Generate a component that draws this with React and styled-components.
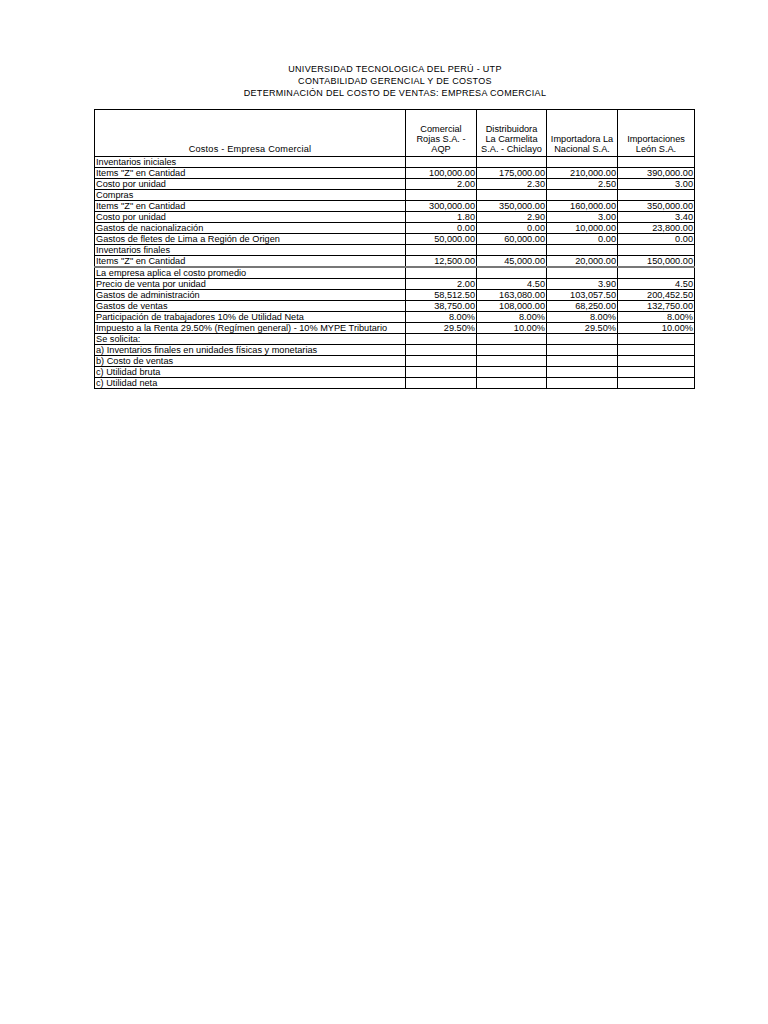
import React from 'react';
import styled, {createGlobalStyle} from 'styled-components';

const GlobalStyle = createGlobalStyle`
    html, body {
        margin: 0;
        padding: 0;
        background: #ffffff;
    }
    body {
        font-family: "Liberation Sans", Arial, sans-serif;
        color: #000;
    }
`;

const Page = styled.div`
    width: 768px;
    height: 1024px;
    padding-top: 63px;
    box-sizing: border-box;
    display: flex;
    flex-direction: column;
    align-items: center;
`;

const Titles = styled.div`
    display: flex;
    flex-direction: column;
    align-items: center;
    margin-left: 22px;
    margin-bottom: 10px;
`;

const TitleLine = styled.div`
    font-size: 9px;
    line-height: 12px;
    letter-spacing: 0.3px;
`;

const Table = styled.table`
    border-collapse: collapse;
    table-layout: fixed;
    width: 600px;
    margin-left: 21px;
    font-size: 9.2px;
`;

const Col = styled.col`
    width: ${p => p.$w}px;
`;

const HeadCell = styled.th`
    font-weight: normal;
    border: 1px solid #000;
    height: 44px;
    vertical-align: bottom;
    text-align: center;
    line-height: 10px;
    padding: 0 1px 2px;
    letter-spacing: ${p => p.$wide ? '0.2px' : '0'};
`;

const HeadLine = styled.div`
    white-space: nowrap;
`;

const LabelCell = styled.td`
    border: 1px solid #000;
    border-bottom: ${p => p.$heavy ? '2px solid #777' : '1px solid #000'};
    height: 10px;
    line-height: 10px;
    padding: 0 1px;
    white-space: nowrap;
    overflow: hidden;
`;

const ValueCell = styled.td`
    border: 1px solid #000;
    border-bottom: ${p => p.$heavy ? '2px solid #777' : '1px solid #000'};
    height: 10px;
    line-height: 10px;
    padding: 0 1px;
    text-align: right;
    white-space: nowrap;
`;

const widths = [311, 71, 70, 71, 77];

const columns = [
    ['Comercial', 'Rojas S.A. -', 'AQP'],
    ['Distribuidora', 'La Carmelita', 'S.A. - Chiclayo'],
    ['Importadora La', 'Nacional S.A.'],
    ['Importaciones', 'León S.A.'],
];

const rows = [
    {label: 'Inventarios iniciales'},
    {label: 'Items "Z" en Cantidad', values: ['100,000.00', '175,000.00', '210,000.00', '390,000.00']},
    {label: 'Costo por unidad', values: ['2.00', '2.30', '2.50', '3.00']},
    {label: 'Compras'},
    {label: 'Items "Z" en Cantidad', values: ['300,000.00', '350,000.00', '160,000.00', '350,000.00']},
    {label: 'Costo por unidad', values: ['1.80', '2.90', '3.00', '3.40']},
    {label: 'Gastos de nacionalización', values: ['0.00', '0.00', '10,000.00', '23,800.00']},
    {label: 'Gastos de fletes de Lima a Región de Origen', values: ['50,000.00', '60,000.00', '0.00', '0.00']},
    {label: 'Inventarios finales'},
    {label: 'Items "Z" en Cantidad', values: ['12,500.00', '45,000.00', '20,000.00', '150,000.00'], heavy: true},
    {label: 'La empresa aplica el costo promedio'},
    {label: 'Precio de venta por unidad', values: ['2.00', '4.50', '3.90', '4.50']},
    {label: 'Gastos de administración', values: ['58,512.50', '163,080.00', '103,057.50', '200,452.50']},
    {label: 'Gastos de ventas', values: ['38,750.00', '108,000.00', '68,250.00', '132,750.00']},
    {label: 'Participación de trabajadores 10% de Utilidad Neta', values: ['8.00%', '8.00%', '8.00%', '8.00%']},
    {label: 'Impuesto a la Renta 29.50% (Regímen general) - 10% MYPE Tributario', values: ['29.50%', '10.00%', '29.50%', '10.00%']},
    {label: 'Se solicita:'},
    {label: 'a) Inventarios finales en unidades físicas y monetarias'},
    {label: 'b) Costo de ventas'},
    {label: 'c) Utilidad bruta'},
    {label: 'c) Utilidad neta'},
];

const App = () => {
    return (
        <Page>
            <GlobalStyle/>
            <Titles>
                <TitleLine>UNIVERSIDAD TECNOLOGICA DEL PERÚ - UTP</TitleLine>
                <TitleLine>CONTABILIDAD GERENCIAL Y DE COSTOS</TitleLine>
                <TitleLine>DETERMINACIÓN DEL COSTO DE VENTAS: EMPRESA COMERCIAL</TitleLine>
            </Titles>
            <Table>
                <colgroup>
                    {widths.map((w, i) => <Col key={i} $w={w}/>)}
                </colgroup>
                <thead>
                    <tr>
                        <HeadCell $wide>Costos - Empresa Comercial</HeadCell>
                        {columns.map((lines, i) =>
                            <HeadCell key={i}>
                                {lines.map((l, j) => <HeadLine key={j}>{l}</HeadLine>)}
                            </HeadCell>
                        )}
                    </tr>
                </thead>
                <tbody>
                    {rows.map((r, i) =>
                        <tr key={i}>
                            <LabelCell $heavy={r.heavy}>{r.label}</LabelCell>
                            {[0, 1, 2, 3].map(c =>
                                <ValueCell key={c} $heavy={r.heavy}>{r.values ? r.values[c] : ''}</ValueCell>
                            )}
                        </tr>
                    )}
                </tbody>
            </Table>
        </Page>
    );
};

export default App;
